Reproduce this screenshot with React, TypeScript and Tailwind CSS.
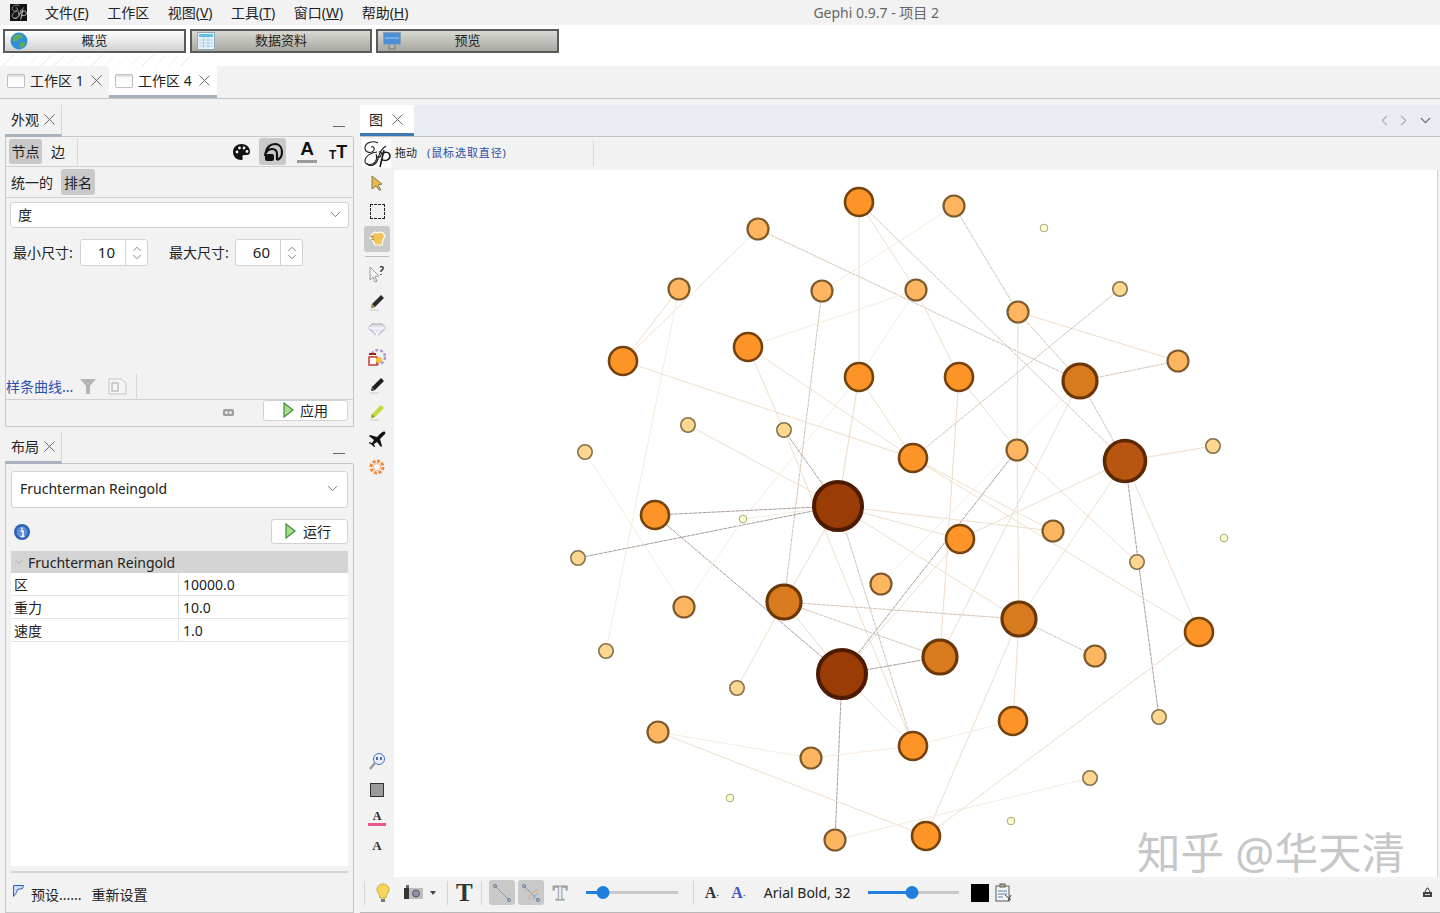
import { ChevronDown, ChevronLeft, ChevronRight, ChevronUp, X } from "lucide-react";

type NodeKind = "xl" | "l" | "m" | "s" | "xs" | "t" | "lg";

const KINDS: Record<NodeKind, { r: number; fill: string; stroke: string; sw: number }> = {
	xl: { r: 24, fill: "#993c05", stroke: "#4c1b02", sw: 4 },
	lg: { r: 20.5, fill: "#b85510", stroke: "#5a2904", sw: 3.6 },
	l: { r: 17, fill: "#d87a1e", stroke: "#6a3708", sw: 3.2 },
	m: { r: 14, fill: "#fd9427", stroke: "#74420f", sw: 2.6 },
	s: { r: 10.5, fill: "#fdb55f", stroke: "#7c5a2c", sw: 2.2 },
	xs: { r: 7.2, fill: "#fdd690", stroke: "#84714a", sw: 1.6 },
	t: { r: 3.8, fill: "#fbfcd2", stroke: "#a8a878", sw: 1 },
};

const NODES: [number, number, NodeKind][] = [
	[838, 506, "xl"], [842, 674, "xl"], [1125, 461, "lg"],
	[1080, 381, "l"], [784, 602, "l"], [1019, 619, "l"], [940, 657, "l"],
	[859, 202, "m"], [623, 361, "m"], [748, 347, "m"], [859, 377, "m"], [959, 377, "m"], [913, 458, "m"],
	[655, 515, "m"], [960, 539, "m"], [1199, 632, "m"], [1013, 721, "m"], [913, 746, "m"], [926, 836, "m"],
	[758, 229, "s"], [954, 206, "s"], [679, 289, "s"], [822, 291, "s"], [916, 290, "s"], [1018, 312, "s"],
	[1178, 361, "s"], [1017, 450, "s"], [1053, 531, "s"], [881, 584, "s"], [684, 607, "s"], [1095, 656, "s"],
	[658, 732, "s"], [811, 758, "s"], [835, 840, "s"],
	[1120, 289, "xs"], [688, 425, "xs"], [784, 430, "xs"], [585, 452, "xs"], [578, 558, "xs"], [1137, 562, "xs"],
	[1213, 446, "xs"], [606, 651, "xs"], [737, 688, "xs"], [1159, 717, "xs"], [1090, 778, "xs"],
	[1044, 228, "t"], [743, 519, "t"], [1224, 538, "t"], [730, 798, "t"], [1011, 821, "t"],
];

// x1 y1 x2 y2 shade (0 faint .. 3 dark)
const EDGES: [number, number, number, number, number][] = [
	[859, 202, 859, 377, 1], [859, 202, 916, 290, 1], [859, 202, 1125, 461, 2],
	[954, 206, 822, 291, 0], [954, 206, 1018, 312, 2],
	[758, 229, 623, 361, 1], [758, 229, 1080, 381, 2],
	[679, 289, 623, 361, 1], [679, 289, 606, 651, 0],
	[822, 291, 784, 602, 2], [916, 290, 748, 347, 0], [916, 290, 859, 377, 0], [916, 290, 959, 377, 1],
	[748, 347, 913, 458, 1], [748, 347, 784, 430, 1], [623, 361, 913, 458, 1],
	[859, 377, 913, 458, 1], [859, 377, 838, 506, 1], [859, 377, 743, 519, 0],
	[784, 430, 838, 506, 3], [784, 430, 913, 746, 1], [688, 425, 838, 506, 1],
	[585, 452, 684, 607, 0], [959, 377, 940, 657, 1], [959, 377, 1017, 450, 1],
	[1018, 312, 1080, 381, 2], [1018, 312, 1178, 361, 1], [1018, 312, 1017, 450, 1], [1017, 450, 1019, 619, 1],
	[1120, 289, 913, 458, 2], [1178, 361, 1080, 381, 2], [1080, 381, 1125, 461, 2],
	[1080, 381, 881, 584, 0], [1080, 381, 940, 657, 1],
	[1213, 446, 1125, 461, 1], [1125, 461, 1159, 717, 3], [1125, 461, 1199, 632, 1],
	[1125, 461, 1019, 619, 1], [1125, 461, 960, 539, 1],
	[913, 458, 1199, 632, 1], [913, 458, 1053, 531, 1], [1017, 450, 1137, 562, 1], [1017, 450, 842, 674, 3],
	[960, 539, 842, 674, 1], [1013, 721, 1019, 619, 1], [784, 602, 1019, 619, 2], [1019, 619, 1095, 656, 2],
	[1019, 619, 926, 836, 1], [838, 506, 1019, 619, 1], [838, 506, 960, 539, 1], [838, 506, 1053, 531, 1],
	[838, 506, 913, 746, 2], [838, 506, 655, 515, 3], [838, 506, 578, 558, 3], [838, 506, 743, 519, 0],
	[655, 515, 842, 674, 3], [784, 602, 842, 674, 1], [784, 602, 737, 688, 1], [784, 602, 940, 657, 2],
	[784, 602, 838, 506, 1], [842, 674, 940, 657, 3], [842, 674, 913, 746, 1], [842, 674, 835, 840, 3],
	[743, 519, 684, 607, 0], [658, 732, 811, 758, 0], [658, 732, 926, 836, 1], [811, 758, 913, 746, 0],
	[913, 746, 1013, 721, 0], [835, 840, 1090, 778, 0], [926, 836, 1199, 632, 1],
];

const SHADES = ["#f7ebdc", "#efddc9", "#d4c2b3", "#a99b99"];

function GraphCanvas() {
	return (
		<svg viewBox="394 170 1043 707" className="block h-full w-full">
			{EDGES.map(([a, b, c, d, s], i) => (
				<line key={i} x1={a} y1={b} x2={c} y2={d} stroke={SHADES[s]} strokeWidth={1} strokeDasharray={s > 1 ? "4 0.7" : undefined} />
			))}
			{NODES.map(([x, y, k], i) => {
				const n = KINDS[k];
				return <circle key={i} cx={x} cy={y} r={n.r} fill={n.fill} stroke={n.stroke} strokeWidth={n.sw} />;
			})}
		</svg>
	);
}

function GephiSwirl({ size, light }: { size: number; light?: boolean }) {
	const c = light ? "#d8d8d8" : "#1a1a1a";
	return (
		<svg width={size} height={size} viewBox="0 0 28 28" fill="none" stroke={c} strokeWidth="1.1">
			<path d="M15 3C9 0 2 3 2 8c0 5 7 6 9 2 1-2-1-4-3-3" />
			<path d="M4 24c4 3 9 1 11-5 1-5 3-10 8-13" />
			<path d="M14 12c-5 0-12 4-12 9 0 4 7 5 10 1 2-3 2-6 1-8" />
			<path d="M17 27l4-17" strokeWidth="1.6" />
			<path d="M19 14c3-3 8-2 8 2s-5 6-9 3" strokeWidth="1.5" />
			<path d="M13 16c2 2 4 2 5-1 1-2 0-4-2-3" />
		</svg>
	);
}

function Globe() {
	return (
		<svg width="18" height="18" viewBox="0 0 18 18">
			<circle cx="9" cy="9" r="8.5" fill="#2f8fd8" />
			<path d="M4 4c3-2 7-2 9 0-1 3-4 2-5 4S5 9 3 9c-1-2 0-4 1-5zM10 11c2-1 5-1 6-1-1 3-3 6-5 6-1-1-2-3-1-5z" fill="#5fae5a" />
		</svg>
	);
}

function TableIcon() {
	return (
		<svg width="18" height="18" viewBox="0 0 18 18">
			<rect x=".5" y=".5" width="17" height="17" fill="#e9f2f8" stroke="#8fa6b4" />
			<rect x="2" y="2" width="14" height="3" fill="#62bfe6" />
			<path d="M2 8h14M2 11h14M2 14h14M6.5 5v11M11 5v11" stroke="#a9d3e8" />
		</svg>
	);
}

function MonitorIcon() {
	return (
		<svg width="18" height="18" viewBox="0 0 18 18">
			<rect x=".5" y=".5" width="17" height="12" fill="#4d8fd6" stroke="#8ea0b0" />
			<path d="M2 6h14" stroke="#a6cdf0" />
			<path d="M6 13v4h6v-4" fill="none" stroke="#777" />
		</svg>
	);
}

function TabPage() {
	return <span className="block h-[14px] w-[18px] shrink-0 rounded-[2px] border border-[#bdbdbd] bg-[linear-gradient(#f7f7f7,#ffffff)] shadow-[inset_0_2px_0_#e2e2e2]" />;
}

function Play() {
	return (
		<svg width="11" height="16" viewBox="0 0 11 16">
			<path d="M1 1l9 7-9 7z" fill="#a8dc8a" stroke="#3f8f35" strokeWidth="1.2" />
		</svg>
	);
}

function Mnemonic({ label, k }: { label: string; k?: string }) {
	return (
		<span>
			{label}
			{k && (
				<>
					(<span className="underline">{k}</span>)
				</>
			)}
		</span>
	);
}

function PerspectiveButton({ active, icon, label, w }: { active?: boolean; icon: React.ReactNode; label: string; w: string }) {
	return (
		<div
			className={`flex h-[24px] items-center border-2 border-[#5a5a5a] pl-[5px] text-[13px] text-[#222] ${w} ${
				active
					? "bg-[linear-gradient(#ffffff,#d2d2d2)]"
					: "bg-[linear-gradient(#d9d9d4,#a8a8a2)]"
			}`}
		>
			{icon}
			<span className="flex-1 pr-[23px] text-center">{label}</span>
		</div>
	);
}

function PanelTab({ label }: { label: string }) {
	return (
		<div className="flex h-[32px] shrink-0 items-stretch pr-[7px]">
			<div className="flex w-[57px] items-center border-b-[3px] border-r border-b-[#a8b2bf] border-r-[#d6d6d6] pl-[6px] text-[14px] text-[#222]">
				{label}
				<X className="ml-[1px] h-[19px] w-[19px] text-[#555]" strokeWidth={1.1} />
			</div>
			<div className="flex-1 border-b border-[#c8c8c8]" />
			<div className="flex w-[20px] items-center border-b border-[#c8c8c8]">
				<div className="mt-[12px] h-px w-[12px] bg-[#666]" />
			</div>
		</div>
	);
}

function Spinner({ value }: { value: string }) {
	return (
		<div className="flex h-[27px] w-[68px] items-stretch rounded-[3px] border border-[#d2d2d2] bg-white">
			<div className="flex w-[44px] items-center justify-end pr-[10px] text-[15px] text-[#222]">{value}</div>
			<div className="flex flex-1 flex-col items-center justify-center border-l border-[#d2d2d2] text-[#444]">
				<ChevronUp className="-mb-[3px] h-[14px] w-[18px]" strokeWidth={1.1} />
				<ChevronDown className="-mt-[3px] h-[14px] w-[18px]" strokeWidth={1.1} />
			</div>
		</div>
	);
}

function ToolButton({ h = "h-[28px]", children }: { h?: string; children: React.ReactNode }) {
	return <div className={`flex w-[34px] items-center justify-center ${h}`}>{children}</div>;
}

function Pen({ color, tip }: { color: string; tip: string }) {
	return (
		<svg width="18" height="18" viewBox="0 0 18 18">
			<path d="M13 2l3 3-9 9-4 1 1-4z" fill={color} />
			<path d="M3 15l1-4 3 3z" fill={tip} />
			<path d="M2 17h9" stroke="#c9c9c9" />
		</svg>
	);
}

function LeftTools() {
	return (
		<div className="flex w-[34px] shrink-0 flex-col justify-between bg-[#f2f2f2] pb-[17px]">
			<div className="-mt-px">
				<ToolButton>
					<svg width="14" height="16" viewBox="0 0 14 16">
						<path d="M2 1l10 8-4 1 3 5-2 0-3-4-4 3z" fill="#e4b94e" stroke="#8a7a4d" />
					</svg>
				</ToolButton>
				<ToolButton>
					<div className="h-[15px] w-[15px] border border-dashed border-[#222]" />
				</ToolButton>
				<div className="mx-[4px] mt-px flex h-[26px] w-[26px] items-center justify-center rounded-[3px] bg-[#c9c9c9]">
					<svg width="17" height="16" viewBox="0 0 17 16">
						<path d="M3 3l3-2 2 1 3-1 3 1 2 3-2 4-1 5H6L4 10 1 7z" fill="#f2c558" stroke="#fff" strokeWidth="1.2" />
						<path d="M1 5l4 1M2 9l3-1" stroke="#777" strokeWidth=".8" />
					</svg>
				</div>
				<div className="mx-[5px] mb-[3px] mt-[4px] h-px bg-[#bcbcbc]" />
				<ToolButton>
					<svg width="20" height="20" viewBox="0 0 20 20">
						<path d="M3 3l9 9-4 .5 2 5-2 .5-2-5-3 3z" fill="#f4f4f4" stroke="#9a9a9a" />
						<path d="M13 3c2-1 4 0 3 2l-2 2v1M14 10v1" fill="none" stroke="#333" strokeWidth="1.4" />
					</svg>
				</ToolButton>
				<ToolButton>
					<Pen color="#2c2c2c" tip="#b89b55" />
				</ToolButton>
				<ToolButton>
					<svg width="20" height="14" viewBox="0 0 20 14">
						<path d="M5 1h10l4 4-9 8-9-8z" fill="#dfe0ea" stroke="#a4a6bc" />
						<path d="M1 5h18M7 5l3 8 3-8" fill="none" stroke="#fff" />
					</svg>
				</ToolButton>
				<ToolButton h="h-[27px]">
					<svg width="20" height="20" viewBox="0 0 20 20">
						<circle cx="11" cy="9" r="7" fill="none" stroke="#b49ac9" strokeWidth="2.5" strokeDasharray="3 2" />
						<rect x="2" y="9" width="8" height="8" fill="#fff" stroke="#c93b2c" strokeWidth="1.5" />
						<path d="M2 6h7" stroke="#a81f16" strokeWidth="2" />
						<circle cx="12" cy="12" r="3" fill="#f2c22f" />
					</svg>
				</ToolButton>
				<ToolButton>
					<Pen color="#1f1f1f" tip="#555" />
				</ToolButton>
				<ToolButton h="h-[26px]">
					<Pen color="#c5d93a" tip="#8ca02a" />
				</ToolButton>
				<ToolButton>
					<svg width="18" height="16" viewBox="0 0 18 16">
						<path d="M17 1c-1-1-3 0-5 2L9 6 2 4 1 5l5 4-2 3-3-1v1l3 2 2 2h1l-1-3 3-2 4 5 1-1-2-7 3-3c2-2 3-3 2-4z" fill="#111" />
					</svg>
				</ToolButton>
				<ToolButton>
					<svg width="18" height="18" viewBox="0 0 18 18">
						<circle cx="9" cy="9" r="6" fill="none" stroke="#f08a3e" strokeWidth="3" strokeDasharray="3 1.6" />
						<circle cx="9" cy="9" r="3.5" fill="#fff" stroke="#f2b48a" />
					</svg>
				</ToolButton>
			</div>
			<div>
				<ToolButton>
					<svg width="20" height="20" viewBox="0 0 20 20">
						<circle cx="12" cy="7" r="5.5" fill="#e9eefc" stroke="#4a6fd0" />
						<path d="M10 5v3M14 5v3" stroke="#1f3fa0" strokeWidth="1.5" />
						<path d="M8 11l-5 6" stroke="#9a9a9a" strokeWidth="2.5" />
					</svg>
				</ToolButton>
				<ToolButton>
					<div className="h-[14px] w-[14px] border border-[#333] bg-[#9a9a9a]" />
				</ToolButton>
				<ToolButton>
					<div className="flex flex-col items-center leading-none">
						<span className="font-['Liberation_Serif',serif] text-[12px] font-bold text-[#222]">A</span>
						<div className="mt-[1px] h-[3px] w-[18px] bg-[#e8558c]" />
					</div>
				</ToolButton>
				<ToolButton>
					<span className="font-['Liberation_Serif',serif] text-[13px] font-bold text-[#333]">A</span>
				</ToolButton>
			</div>
		</div>
	);
}

function Slider({ pct, w }: { pct: number; w: string }) {
	return (
		<div className={`relative h-[3px] bg-[#c8c8c8] ${w}`}>
			<div className="h-full bg-[#1e7fdc]" style={{ width: `${pct}%` }} />
			<div className="absolute top-[-5px] h-[13px] w-[13px] -translate-x-1/2 rounded-full bg-[#1e7fdc]" style={{ left: `${pct}%` }} />
		</div>
	);
}

function Sep({ ml }: { ml: string }) {
	return <div className={`h-[24px] w-px bg-[#d4d4d4] ${ml}`} />;
}

function BottomBar() {
	return (
		<div className="flex h-[36px] shrink-0 items-center border-b border-[#b8b8b8] bg-[#f2f2f2] pb-[4px] text-[#222]">
			<Sep ml="ml-[4px]" />
			<svg className="ml-[11px]" width="14" height="20" viewBox="0 0 14 20">
				<path d="M7 1c4 0 6 3 6 6 0 3-3 4-3 8H4c0-4-3-5-3-8 0-3 2-6 6-6z" fill="#f5d65a" stroke="#c7a83a" />
				<path d="M5 16h4v3H5z" fill="#777" />
			</svg>
			<svg className="ml-[14px]" width="20" height="15" viewBox="0 0 20 15">
				<rect x="0" y="3" width="19" height="11" fill="#bdbdbd" />
				<rect x="0" y="3" width="5" height="11" fill="#333" />
				<circle cx="12" cy="8.5" r="3.5" fill="#8f8fb0" stroke="#555" />
				<rect x="2" y="0" width="3" height="3" fill="#666" />
			</svg>
			<div className="ml-[6px] h-0 w-0 border-x-[3px] border-t-[4px] border-x-transparent border-t-[#444]" />
			<Sep ml="ml-[11px]" />
			<span className="ml-[8px] font-['Liberation_Serif',serif] text-[25px] font-bold leading-none text-[#333]">T</span>
			<Sep ml="ml-[8px]" />
			<div className="ml-[7px] flex h-[25px] w-[26px] items-center justify-center rounded-[3px] bg-[#c9c9c9]">
				<svg width="20" height="20" viewBox="0 0 20 20">
					<path d="M3 3l14 14" stroke="#8a9ab0" />
					<circle cx="3" cy="3" r="1.5" fill="none" stroke="#6a7f9a" />
					<circle cx="17" cy="17" r="1.5" fill="none" stroke="#6a7f9a" />
				</svg>
			</div>
			<div className="ml-[3px] flex h-[25px] w-[26px] items-center justify-center rounded-[3px] bg-[#c9c9c9]">
				<svg width="20" height="20" viewBox="0 0 20 20" fill="none">
					<path d="M3 3l14 14" stroke="#8a9ab0" />
					<path d="M8 17c0-5 3-8 9-10" stroke="#e8a05a" />
					<path d="M12 17c0-3 1-5 5-6" stroke="#6fb0d8" />
					<circle cx="3" cy="3" r="1.5" stroke="#6a7f9a" />
					<circle cx="17" cy="17" r="1.5" stroke="#6a7f9a" />
				</svg>
			</div>
			<span className="ml-[9px] w-[16px] font-['Liberation_Serif',serif] text-[22px] font-bold leading-none text-[#f2f2f2] [-webkit-text-stroke:1px_#9a9a9a]">T</span>
			<Slider pct={19} w="ml-[17px] w-[92px]" />
			<Sep ml="ml-[15px]" />
			<span className="ml-[11px] font-['Liberation_Serif',serif] text-[16px] font-bold text-[#333]">
				A<span className="text-[9px]">·</span>
			</span>
			<span className="ml-[12px] font-['Liberation_Serif',serif] text-[16px] font-bold text-[#3f56b8]">
				A<span className="text-[9px]">·</span>
			</span>
			<span className="ml-[18px] text-[14px] text-[#222]">Arial Bold, 32</span>
			<Slider pct={49} w="ml-[17px] w-[91px]" />
			<div className="ml-[12px] h-[18px] w-[18px] bg-black" />
			<svg className="ml-[6px]" width="18" height="19" viewBox="0 0 18 19" fill="none">
				<rect x="1" y="3" width="13" height="15" fill="#f4f4f4" stroke="#5a5a5a" />
				<rect x="5" y="1" width="5" height="3" fill="#c8b070" stroke="#5a5a5a" />
				<path d="M3 8h9M3 11h9M3 14h5" stroke="#5a7fa8" />
				<path d="M10 12l6 5M16 12l-3 6" stroke="#444" />
			</svg>
			<svg className="ml-auto mr-[7px]" width="11" height="11" viewBox="0 0 11 11">
				<path d="M3 5l2-4h1l2 4" fill="none" stroke="#444" />
				<rect x="1" y="5" width="9" height="5" fill="#444" />
				<path d="M3 7.500h5" stroke="#ddd" />
			</svg>
		</div>
	);
}

function PropRow({ name, value }: { name: string; value: string }) {
	return (
		<div className="flex h-[23px] border-b border-[#e4e4e4] bg-white text-[14px] text-[#222]">
			<div className="flex w-[168px] items-center border-r border-[#e4e4e4] pl-[3px]">{name}</div>
			<div className="flex items-center pl-[4px]">{value}</div>
		</div>
	);
}

function AppearancePanel() {
	return (
		<div className="flex h-[290px] w-[349px] shrink-0 flex-col border-x border-b border-[#c8c8c8] text-[14px] text-[#222]">
			<div className="flex h-[30px] shrink-0 items-center border-b border-[#d0d0d0] pl-[3px] pr-[5px]">
				<div className="flex h-[25px] w-[33px] items-center justify-center rounded-[3px] bg-[#c9c9c9]">节点</div>
				<div className="ml-[9px] w-[15px]">边</div>
				<div className="ml-[11px] h-[26px] w-px bg-[#d8d8d8]" />
				<svg className="ml-auto" width="17" height="16" viewBox="0 0 17 16">
					<path d="M8.500 0C4 0 0 3 0 8s4 8 8 8c2 0 2-1.500 1.500-2.500S9.500 11 11 11h3c2 0 3-1.500 3-3.500C17 3 13 0 8.500 0z" fill="#111" />
					<circle cx="4" cy="8" r="1.400" fill="#f2f2f2" />
					<circle cx="6.500" cy="4" r="1.400" fill="#f2f2f2" />
					<circle cx="11" cy="4" r="1.400" fill="#f2f2f2" />
					<circle cx="14" cy="7.500" r="1.400" fill="#f2f2f2" />
				</svg>
				<div className="ml-[9px] flex h-[27px] w-[27px] items-center justify-center rounded-[3px] bg-[#c9c9c9]">
					<svg width="22" height="22" viewBox="0 0 22 22" fill="none" stroke="#111" strokeWidth="2.2">
						<path d="M4 12c0-5 4-9 9-9 4 0 7 3 7 8 0 4-2 7-5 8" />
						<path d="M3 15c0-4 3-7 7-7 3 0 5 2 5 5v6" />
						<rect x="3" y="13" width="9" height="7" rx="2" fill="#111" stroke="none" />
					</svg>
				</div>
				<div className="ml-[11px] flex w-[20px] flex-col items-center leading-none">
					<span className="font-['Liberation_Sans',sans-serif] text-[19px] font-bold leading-[18px] text-[#111]">A</span>
					<div className="mt-[2px] h-[3px] w-[20px] bg-[#9a9a9a]" />
				</div>
				<span className="ml-[12px] flex w-[19px] items-end font-['Liberation_Sans',sans-serif] font-bold leading-none text-[#111]">
					<span className="text-[12px]">T</span>
					<span className="text-[18px]">T</span>
				</span>
			</div>
			<div className="flex h-[31px] shrink-0 items-center border-b border-[#d0d0d0] pl-[5px]">
				<span className="w-[50px]">统一的</span>
				<div className="flex h-[26px] w-[34px] items-center justify-center rounded-[3px] bg-[#c9c9c9]">排名</div>
			</div>
			<div className="mx-[4px] mt-[4px] flex h-[26px] shrink-0 items-center justify-between rounded-[3px] border border-[#d2d2d2] bg-white pb-[2px] pl-[7px] pr-[4px]">
				<span>度</span>
				<ChevronDown className="h-[17px] w-[17px] text-[#555]" strokeWidth={1.1} />
			</div>
			<div className="mt-[11px] flex shrink-0 items-center pl-[7px]">
				<span className="w-[67px]">最小尺寸:</span>
				<Spinner value="10" />
				<span className="ml-[21px] w-[66px]">最大尺寸:</span>
				<Spinner value="60" />
			</div>
			<div className="flex-1" />
			<div className="flex h-[24px] shrink-0 items-center pt-[2px]">
				<span className="text-[#2a4fb5]">样条曲线...</span>
				<svg className="ml-[7px]" width="16" height="17" viewBox="0 0 16 17">
					<path d="M0 1h16L10 8v8H6V8z" fill="#b4b4b4" />
				</svg>
				<svg className="ml-[12px]" width="19" height="17" viewBox="0 0 19 17" fill="none">
					<path d="M1 1h12l5 4v11H1z" fill="#f4f4f4" stroke="#c4c4c4" />
					<rect x="4" y="5" width="6" height="8" stroke="#aaa" />
				</svg>
				<div className="ml-[9px] h-[24px] w-px bg-[#d8d8d8]" />
			</div>
			<div className="mt-[2px] flex h-[27px] shrink-0 items-start border-t border-[#d0d0d0] pr-[5px]">
				<svg className="ml-auto mt-[9px]" width="11" height="7" viewBox="0 0 11 7">
					<rect width="11" height="7" rx="1.500" fill="#a0a0a0" />
					<circle cx="3.500" cy="3.500" r="1.500" fill="#e8e8e8" />
					<circle cx="7.500" cy="3.500" r="1.500" fill="#e8e8e8" />
				</svg>
				<div className="ml-[29px] flex h-[21px] w-[85px] items-center justify-center gap-[6px] rounded-[3px] border border-[#d2d2d2] bg-white pb-[1px]">
					<Play />
					<span>应用</span>
				</div>
			</div>
		</div>
	);
}

function LayoutPanel() {
	return (
		<div className="flex w-[349px] flex-1 flex-col border-x border-b border-[#c8c8c8] text-[14px] text-[#222]">
			<div className="mx-[5px] mt-[7px] flex h-[37px] shrink-0 items-center justify-between rounded-[3px] border border-[#d2d2d2] bg-white pb-[2px] pl-[8px] pr-[6px]">
				<span>Fruchterman Reingold</span>
				<ChevronDown className="h-[17px] w-[17px] text-[#555]" strokeWidth={1.1} />
			</div>
			<div className="mt-[11px] flex h-[25px] shrink-0 items-center justify-between pl-[8px] pr-[5px]">
				<svg width="16" height="16" viewBox="0 0 16 16">
					<circle cx="8" cy="8" r="8" fill="#2f62b5" />
					<circle cx="8" cy="8" r="5.500" fill="#5a8fd8" />
					<path d="M8 3.500v2M6.500 7H9v5.500M6.500 12.500h4" stroke="#fff" strokeWidth="1.500" fill="none" />
				</svg>
				<div className="flex h-[25px] w-[77px] items-center justify-center gap-[7px] rounded-[3px] border border-[#d2d2d2] bg-white pb-[1px] pr-[3px]">
					<Play />
					<span>运行</span>
				</div>
			</div>
			<div className="mx-[5px] mt-[7px] flex flex-1 flex-col bg-white">
				<div className="flex h-[22px] shrink-0 items-center bg-[#d4d4d4] pl-[2px]">
					<ChevronDown className="mr-[3px] h-[12px] w-[12px] text-[#a8a8a8]" strokeWidth={2} />
					Fruchterman Reingold
				</div>
				<PropRow name="区" value="10000.0" />
				<PropRow name="重力" value="10.0" />
				<PropRow name="速度" value="1.0" />
			</div>
			<div className="mx-[5px] mt-[5px] h-[2px] shrink-0 bg-[#d4d4d4]" />
			<div className="flex h-[39px] shrink-0 items-center pl-[7px] pt-[4px]">
				<svg className="mb-[8px]" width="11" height="12" viewBox="0 0 11 12">
					<path d="M.5.5h10l-1 3-5 1-1 3-3 4z" fill="#c8ddf2" stroke="#2f62b5" />
				</svg>
				<span className="ml-[7px]">预设......</span>
				<span className="ml-[10px]">重新设置</span>
			</div>
		</div>
	);
}

export default function App() {
	return (
		<div className="flex h-[913px] w-[1440px] flex-col overflow-hidden bg-[#f2f2f2] font-['Noto_Sans','Noto_Sans_CJK_SC',sans-serif]">
			<div className="flex h-[25px] shrink-0 items-center pb-[1px] text-[14px] text-[#222]">
				<div className="ml-[10px] flex h-[17px] w-[17px] items-center justify-center bg-[#111]">
					<GephiSwirl size={16} light />
				</div>
				<div className="ml-[18px] flex gap-[18.500px]">
					<Mnemonic label="文件" k="F" />
					<Mnemonic label="工作区" />
					<Mnemonic label="视图" k="V" />
					<Mnemonic label="工具" k="T" />
					<Mnemonic label="窗口" k="W" />
					<Mnemonic label="帮助" k="H" />
				</div>
				<span className="ml-[405px] text-[#666]">Gephi 0.9.7 - 项目 2</span>
			</div>

			<div className="h-[41px] shrink-0 bg-white">
				<div className="flex gap-[4px] pl-[3px] pt-[4px]">
					<PerspectiveButton active icon={<Globe />} label="概览" w="w-[183px]" />
					<PerspectiveButton icon={<TableIcon />} label="数据资料" w="w-[182px]" />
					<PerspectiveButton icon={<MonitorIcon />} label="预览" w="w-[183px]" />
				</div>
				<div className="mt-[2px] h-[11px] w-[190px] bg-[repeating-linear-gradient(135deg,#f1f1f1_0,#f1f1f1_1px,#ffffff_1px,#ffffff_9px)]" />
			</div>

			<div className="flex h-[33px] shrink-0 whitespace-nowrap border-b border-[#c4c4c4] text-[14px] text-[#222]">
				<div className="flex w-[109px] shrink-0 items-center pl-[7px] pb-[3px]">
					<TabPage />
					<span className="ml-[5px] w-[53px] shrink-0">工作区 1</span>
					<X className="ml-[4px] h-[19px] w-[19px] shrink-0 text-[#555]" strokeWidth={1.1} />
				</div>
				<div className="flex w-[108px] shrink-0 items-center border-b-[3px] border-[#a8b2bf] bg-white pl-[6px]">
					<TabPage />
					<span className="ml-[5px] w-[53px] shrink-0">工作区 4</span>
					<X className="ml-[4px] h-[19px] w-[19px] shrink-0 text-[#555]" strokeWidth={1.1} />
				</div>
			</div>

			<div className="flex min-h-0 flex-1">
				<div className="flex w-[360px] shrink-0 flex-col pl-[5px] pt-[6px]">
					<PanelTab label="外观" />
					<AppearancePanel />
					<div className="h-[5px] shrink-0" />
					<PanelTab label="布局" />
					<LayoutPanel />
				</div>

				<div className="flex min-w-0 flex-1 flex-col pt-[6px]">
					<div className="flex h-[32px] shrink-0 items-stretch border-b border-[#c0c4ca] bg-[#e9edf3]">
						<div className="flex w-[54px] items-center justify-center gap-[5px] border-b-[3px] border-[#3d7ab5] bg-white pl-[2px] text-[14px] text-[#222]">
							图
							<X className="h-[19px] w-[19px] text-[#555]" strokeWidth={1.1} />
						</div>
						<div className="ml-auto flex items-center gap-[2px] pr-[6px]">
							<ChevronLeft className="h-[17px] w-[17px] text-[#a8adb4]" strokeWidth={1.5} />
							<ChevronRight className="h-[17px] w-[17px] text-[#a8adb4]" strokeWidth={1.5} />
							<ChevronDown className="ml-[3px] h-[17px] w-[17px] text-[#667]" strokeWidth={1.8} />
						</div>
					</div>
					<div className="flex h-[33px] shrink-0 items-center">
						<div className="ml-[2px] flex h-[29px] w-[29px] items-center justify-center bg-white">
							<GephiSwirl size={28} />
						</div>
						<span className="ml-[4px] text-[11px] text-[#222]">拖动</span>
						<span className="ml-[10px] w-[166px] text-[11px] tracking-[0.9px] text-[#2a4fa5]">(鼠标选取直径)</span>
						<div className="h-[25px] w-px bg-[#d8d8d8]" />
					</div>
					<div className="flex min-h-0 flex-1">
						<LeftTools />
						<div className="relative min-w-0 flex-1 bg-white">
							<GraphCanvas />
							<span className="absolute left-[743px] top-[661px] whitespace-pre text-[43.500px] leading-none text-[#c6c7c9]">知乎 @华天清</span>
						</div>
						<div className="w-[3px] shrink-0 border-l border-[#d4d4d4] bg-[#f2f2f2]" />
					</div>
					<BottomBar />
				</div>
			</div>
		</div>
	);
}
